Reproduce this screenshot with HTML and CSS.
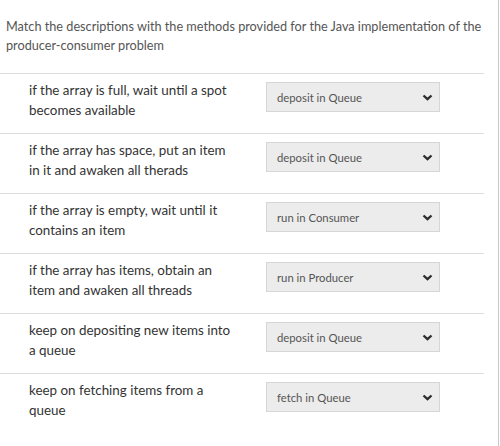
FILE: index.html
```html
<!DOCTYPE html>
<html>
<head>
<meta charset="utf-8">
<link rel="stylesheet" href="styles.css">
</head>
<body>
<div class="page">
  <p class="prompt">Match the descriptions with the methods provided for the Java implementation of the producer-consumer problem</p>
  <div class="rows">
    <div class="row">
      <div class="desc">if the array is full, wait until a spot becomes available</div>
      <div class="select"><span>deposit in Queue</span><svg class="chev" width="11" height="7" viewBox="0 0 11 7"><polyline points="1.5,1.5 5.5,5.2 9.5,1.5" fill="none" stroke="#2d2d2d" stroke-width="2.3"/></svg></div>
    </div>
    <div class="row">
      <div class="desc">if the array has space, put an item in it and awaken all therads</div>
      <div class="select"><span>deposit in Queue</span><svg class="chev" width="11" height="7" viewBox="0 0 11 7"><polyline points="1.5,1.5 5.5,5.2 9.5,1.5" fill="none" stroke="#2d2d2d" stroke-width="2.3"/></svg></div>
    </div>
    <div class="row">
      <div class="desc">if the array is empty, wait until it contains an item</div>
      <div class="select"><span>run in Consumer</span><svg class="chev" width="11" height="7" viewBox="0 0 11 7"><polyline points="1.5,1.5 5.5,5.2 9.5,1.5" fill="none" stroke="#2d2d2d" stroke-width="2.3"/></svg></div>
    </div>
    <div class="row">
      <div class="desc">if the array has items, obtain an item and awaken all threads</div>
      <div class="select"><span>run in Producer</span><svg class="chev" width="11" height="7" viewBox="0 0 11 7"><polyline points="1.5,1.5 5.5,5.2 9.5,1.5" fill="none" stroke="#2d2d2d" stroke-width="2.3"/></svg></div>
    </div>
    <div class="row">
      <div class="desc">keep on depositing new items into a queue</div>
      <div class="select"><span>deposit in Queue</span><svg class="chev" width="11" height="7" viewBox="0 0 11 7"><polyline points="1.5,1.5 5.5,5.2 9.5,1.5" fill="none" stroke="#2d2d2d" stroke-width="2.3"/></svg></div>
    </div>
    <div class="row">
      <div class="desc">keep on fetching items from a queue</div>
      <div class="select"><span>fetch in Queue</span><svg class="chev" width="11" height="7" viewBox="0 0 11 7"><polyline points="1.5,1.5 5.5,5.2 9.5,1.5" fill="none" stroke="#2d2d2d" stroke-width="2.3"/></svg></div>
    </div>
  </div>
</div>
</body>
</html>
```
FILE: styles.css
```css
html, body {
  margin: 0;
  padding: 0;
  background: #fff;
}
.page {
  width: 498px;
  height: 446px;
  border-right: 1px solid #c9c9c9;
  font-family: Lato, "Open Sans", sans-serif;
  overflow: hidden;
}
.prompt {
  margin: 0;
  padding: 17px 6px 18px 6px;
  font-size: 12.7px;
  line-height: 19px;
  color: #555;
}
.rows {
  width: 484px;
}
.row {
  display: flex;
  align-items: flex-start;
  height: 59px;
  border-top: 1px solid #dcdcdc;
}
.desc {
  flex: 0 0 206px;
  margin-left: 29px;
  padding-top: 7px;
  font-size: 13.4px;
  line-height: 19.5px;
  color: #333;
}
.select {
  margin-left: 31px;
  margin-top: 8px;
  width: 156px;
  height: 28px;
  border: 1px solid #d6d6d6;
  background: #ececec;
  display: flex;
  align-items: center;
  justify-content: space-between;
  padding: 0 6px 0 10px;
  font-size: 11.3px;
  color: #555;
}
.chev {
  display: block;
  margin-top: 1px;
}
```
